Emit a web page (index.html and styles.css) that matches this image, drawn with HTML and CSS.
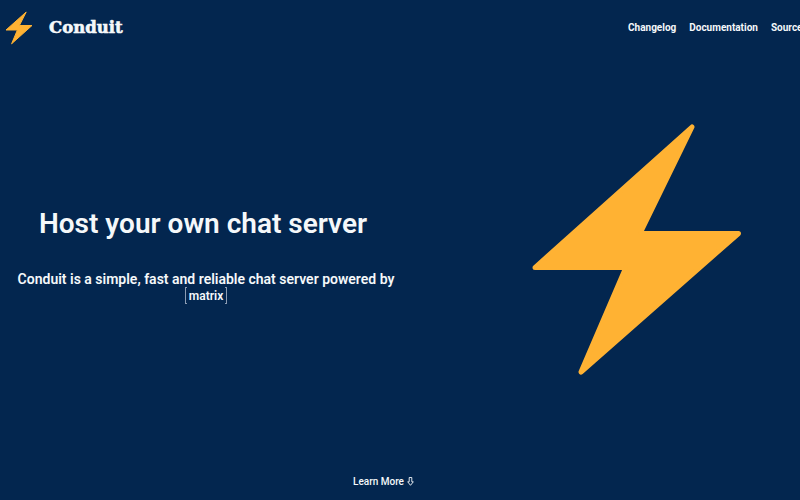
FILE: index.html
```html
<!DOCTYPE html>
<html lang="en">
<head>
<meta charset="utf-8">
<title>Conduit</title>
<link rel="stylesheet" href="styles.css">
</head>
<body>
<div class="page">
  <header class="nav">
    <a class="brand" href="#">
      <svg class="brand-bolt" viewBox="0 0 28 34" width="28" height="34" aria-hidden="true">
        <polygon class="bolt-shape small" points="21.2,1 14.4,14.5 27,14.5 6.6,32.8 12.4,19 1,19"/>
      </svg>
      <span class="brand-name">Conduit</span>
    </a>
    <nav class="links">
      <a href="#">Changelog</a>
      <a href="#">Documentation</a>
      <a href="#">Source</a>
    </nav>
  </header>
  <main class="hero">
    <section class="intro">
      <h1>Host your own chat server</h1>
      <p>Conduit is a simple, fast and reliable chat server powered by</p>
      <div class="matrix"><span class="bracket"></span><span class="matrix-word">matrix</span><span class="bracket end"></span></div>
    </section>
    <section class="art">
      <svg viewBox="0 0 400 300" width="400" height="300" aria-hidden="true">
        <path class="bolt-shape" d="M292 18 L241 122.5 Q240.5 124.5 243 124.5 L338.5 124.5 L181 263 L225 160.5 Q225.5 158.5 223 158.5 L135 158.5 Z"/>
      </svg>
    </section>
  </main>
  <footer class="more">
    <a class="more-link" href="#">Learn More
      <svg class="arrow" viewBox="0 0 7 9" width="7" height="9" aria-hidden="true">
        <path d="M2.2 0.5h2.6v4.3h1.5L3.5 8.3 0.7 4.8h1.5z"/>
      </svg>
    </a>
  </footer>
</div>
</body>
</html>
```

FILE: styles.css
```css
html, body {
  margin: 0;
  padding: 0;
  height: 100%;
  background: #03264f;
  overflow: hidden;
}
a {
  color: inherit;
  text-decoration: none;
}
.page {
  width: 800px;
  height: 500px;
  display: flex;
  flex-direction: column;
  color: #f5f8fa;
  font-family: "Roboto", "Noto Sans", sans-serif;
  overflow: hidden;
}
.nav {
  height: 55px;
  flex: none;
  display: flex;
  justify-content: space-between;
  align-items: center;
}
.brand {
  display: flex;
  align-items: center;
  gap: 16px;
  padding-left: 5px;
}
.brand-name {
  font-family: "DejaVu Serif", serif;
  font-weight: 700;
  font-size: 16.5px;
  -webkit-text-stroke: 0.6px #f5f8fa;
}
.links {
  display: flex;
  gap: 13px;
  font-size: 10px;
  font-weight: 700;
  flex: none;
  margin-right: -2.5px;
}
.bolt-shape {
  fill: #ffb233;
  stroke: #ffb233;
  stroke-width: 5;
  stroke-linejoin: round;
}
.bolt-shape.small {
  stroke-width: 1;
}
.hero {
  flex: 1;
  display: grid;
  grid-template-columns: 412px 388px;
  align-items: center;
}
.intro {
  text-align: center;
  padding-bottom: 8px;
}
h1 {
  margin: 0 6px 29px 0;
  font-size: 28px;
  font-weight: 600;
  line-height: 36px;
}
.intro p {
  margin: 0;
  font-size: 14px;
  font-weight: 600;
  line-height: 16px;
}
.matrix {
  display: flex;
  justify-content: center;
  align-items: center;
  gap: 2px;
  height: 18px;
  font-size: 12px;
  font-weight: 600;
}
.bracket {
  width: 2px;
  height: 17px;
  border: 1px solid #8c9cb3;
  border-right: 0;
  box-sizing: border-box;
}
.bracket.end {
  border: 1px solid #8c9cb3;
  border-left: 0;
}
.art {
  margin-left: -12px;
  display: flex;
}
.more {
  flex: none;
  height: 37px;
  box-sizing: border-box;
  padding: 12px 33px 0 0;
  display: flex;
  justify-content: center;
  font-size: 10px;
  font-weight: 500;
}
.more-link {
  display: flex;
  align-items: center;
  gap: 3px;
  height: 13px;
}
.arrow {
  fill: none;
  stroke: #f5f8fa;
  stroke-width: 0.9;
}
```
